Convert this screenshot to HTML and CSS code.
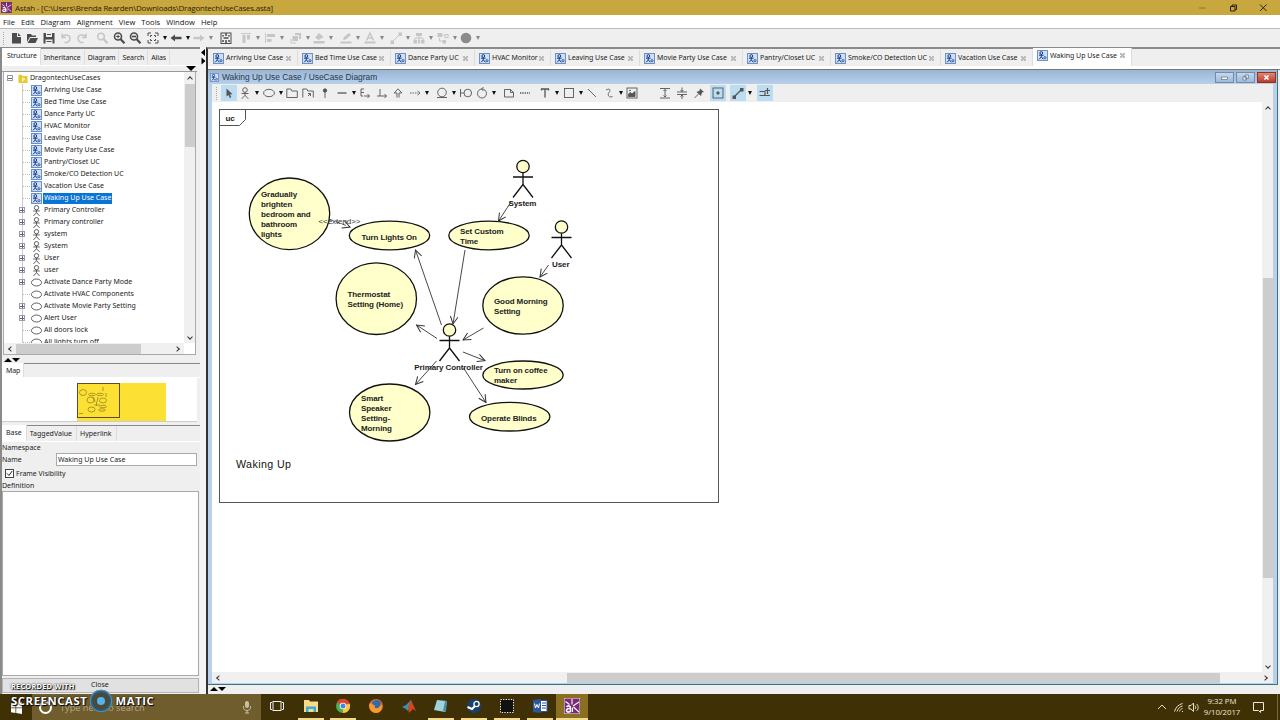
FILE: index.html
```html
<!DOCTYPE html>
<html lang="en">
<head>
    <meta charset="UTF-8">
    <meta name="viewport" content="width=device-width, initial-scale=1.0">
    <title>Astah</title>
    <link rel="stylesheet" href="styles.css">
</head>
<body>
    <!-- icon sprite -->
    <svg class="sprite">
        <symbol id="uc" viewBox="0 0 11 11"><rect x=".5" y=".5" width="10" height="10" fill="#cfdff5" stroke="#6c91c8"/><circle cx="4.3" cy="3" r="1.4" fill="none" stroke="#163c8c"/><path d="M4.3 4.5v2.3M2 5.2h4.6M4.3 6.8L2.2 9.3M4.3 6.8l2 2.5" stroke="#163c8c" fill="none"/><circle cx="8" cy="7.7" r="1.1" fill="none" stroke="#163c8c" stroke-width=".8"/></symbol>
        <symbol id="actor" viewBox="0 0 16 16"><circle cx="8" cy="5" r="2.3"/><path d="M8 7.3v3M4.5 8.5h7M8 10.3l-3.3 3.5M8 10.3l3.3 3.5"/></symbol>
        <symbol id="oval" viewBox="0 0 16 16"><ellipse cx="8" cy="8" rx="5.4" ry="3.7"/></symbol>
        <symbol id="new" viewBox="0 0 16 16"><path d="M4 3h5v4h4v6.500H4zM10 3l3 3h-3z" fill="currentColor" stroke="none"/></symbol>
        <symbol id="open" viewBox="0 0 16 16"><path d="M3 12V4h4l1 1.500h4V7H6zM6.500 8H14l-2.500 5H3.500z" fill="currentColor" stroke="none"/></symbol>
        <symbol id="save" viewBox="0 0 16 16"><path d="M2.500 3h11v10.500h-11zM5 3v4h6V3zM4.500 9.500v4h7v-4z" fill="currentColor" fill-rule="evenodd" stroke="none"/><path d="M6 4.500h4M5.500 11.500h5"/></symbol>
        <symbol id="undo" viewBox="0 0 16 16"><path d="M4 3.500v4h4M4.300 7C6 4 12 4 12 8.500c0 3-3 4.500-5.500 4" stroke-width="1.500"/></symbol>
        <symbol id="redo" viewBox="0 0 16 16"><path d="M12 3.500v4H8M11.700 7C10 4 4 4 4 8.500c0 3 3 4.500 5.500 4" stroke-width="1.500"/></symbol>
        <symbol id="mag" viewBox="0 0 16 16"><circle cx="7" cy="6.500" r="3.300" stroke-width="1.600"/><path d="M9.500 9l4 4.200" stroke-width="2.200"/></symbol>
        <symbol id="magplus" viewBox="0 0 16 16"><circle cx="7" cy="6.500" r="3.500" stroke-width="1.600"/><path d="M9.500 9l4 4.200" stroke-width="2.200"/><path d="M5.200 6.500h3.600M7 4.700v3.600"/></symbol>
        <symbol id="magminus" viewBox="0 0 16 16"><circle cx="7" cy="6.500" r="3.500" stroke-width="1.600"/><path d="M9.500 9l4 4.200" stroke-width="2.200"/><path d="M5 6.500h4" stroke-width="1.700"/></symbol>
        <symbol id="fit" viewBox="0 0 16 16"><path d="M3 6V3h3M10 3h3v3M13 10v3h-3M6 13H3v-3"/><path d="M5.500 7V5.500H7M9 5.500h1.500V7M10.500 9v1.500H9M7 10.500H5.500V9"/></symbol>
        <symbol id="left" viewBox="0 0 16 16"><path d="M2.500 8L7 4.500v2.300h6.500v2.400H7v2.300z" fill="currentColor" stroke="none"/></symbol>
        <symbol id="right" viewBox="0 0 16 16"><path d="M13.500 8L9 4.500v2.300H2.500v2.400H9v2.300z" fill="currentColor" stroke="none"/></symbol>
        <symbol id="grid" viewBox="0 0 16 16"><rect x="3" y="3" width="10" height="10.500"/><path d="M8 3v3M8 10v3.500M5 5v1.500M11 5v1.500M5.500 8h5M5 10v2M11 10v2" stroke-width="1.500"/></symbol>
        <symbol id="altop" viewBox="0 0 16 16"><path d="M3 3.500h10"/><path d="M4.500 5h3v8h-3zM9 5h3v4.500H9z" fill="currentColor" stroke="none"/></symbol>
        <symbol id="alleft" viewBox="0 0 16 16"><path d="M3.500 3v10"/><path d="M5 4h8v3H5zM5 9h4.500v3H5z" fill="currentColor" stroke="none"/></symbol>
        <symbol id="order" viewBox="0 0 16 16"><path d="M7 3h6v6h-2V5H7zM4.500 6H10v5H4.500z" fill="currentColor" stroke="none"/><path d="M3 9v4h5"/></symbol>
        <symbol id="fill" viewBox="0 0 16 16"><path d="M8 3l4.500 4-5 3-3.500-2.500zM2.500 11h11v2.500h-11z" fill="currentColor" stroke="none"/></symbol>
        <symbol id="pen" viewBox="0 0 16 16"><path d="M5 10l1-3 5-4 2 2-5 4.500zM2.500 11.500h11v2h-11z" fill="currentColor" stroke="none"/></symbol>
        <symbol id="fontc" viewBox="0 0 16 16"><path d="M4.500 10.500L8 3l3.500 7.500M6 8h4" stroke-width="1.500"/><path d="M2.500 12.500h11" stroke-width="2"/></symbol>
        <symbol id="link" viewBox="0 0 16 16"><path d="M4.500 11.500l7-7"/><path d="M2.500 10.500H6V14H2.500zM10.500 2.500H14V6h-3.500z" fill="currentColor" stroke="none"/></symbol>
        <symbol id="tree" viewBox="0 0 16 16"><path d="M5 3h6v3H5zM2.500 10H6v3.500H2.500zM10 10h3.500v3.500H10zM7 10h2v3.500H7z" fill="currentColor" stroke="none"/><path d="M8 6v4M4 10V8h8v2"/></symbol>
        <symbol id="flow" viewBox="0 0 16 16"><path d="M2.500 3H7v4H2.500zM7.500 10H11v3.500H7.500z" fill="currentColor" stroke="none"/><path d="M7 5h2M4.500 8v3h3"/><rect x="10" y="4.500" width="3" height="3"/></symbol>
        <symbol id="ball" viewBox="0 0 16 16"><circle cx="8" cy="8" r="5.300" fill="currentColor" stroke="none"/></symbol>

        <symbol id="cursor" viewBox="0 0 16 16"><path d="M5.500 3.500v8l2-1.600 1.300 3 1.500-.700L9 9.500l2.500-.3z" fill="currentColor" stroke="none"/></symbol>
        <symbol id="pkg" viewBox="0 0 16 16"><path d="M2.800 12.500v-8.500h4l1 2h5.500v6.500z"/></symbol>
        <symbol id="pkgin" viewBox="0 0 16 16"><path d="M2.800 12.500v-8.500h4l1 2h5.500v6.500M8 11l2.500-2.500M10.500 11V8.500H8"/></symbol>
        <symbol id="pin" viewBox="0 0 16 16"><circle cx="8" cy="5.500" r="1.700" fill="currentColor"/><path d="M8 7v6"/></symbol>
        <symbol id="dash" viewBox="0 0 16 16"><path d="M3.500 8h9" stroke-width="1.300"/></symbol>
        <symbol id="eline" viewBox="0 0 16 16"><path d="M7 4H4v7h2M4 7.500h3M7 11h5.500M10.500 9l2 2-2 2"/></symbol>
        <symbol id="tline" viewBox="0 0 16 16"><path d="M6 4v7M3 11h9.500M10.500 9l2 2-2 2"/></symbol>
        <symbol id="up" viewBox="0 0 16 16"><path d="M7 12.500V8H4.200L8 3.800 11.800 8H9v4.500"/></symbol>
        <symbol id="dots" viewBox="0 0 16 16"><path d="M3 8h8" stroke-dasharray="1.500 1"/><path d="M10.500 6l2.500 2-2.500 2"/></symbol>
        <symbol id="entity" viewBox="0 0 16 16"><circle cx="8" cy="7.500" r="4.300"/><path d="M3 12.500h10"/></symbol>
        <symbol id="bound" viewBox="0 0 16 16"><circle cx="9.800" cy="8" r="3.800"/><path d="M2.500 4v8M2.500 8H6"/></symbol>
        <symbol id="control" viewBox="0 0 16 16"><circle cx="8" cy="8.500" r="4.500"/><path d="M9.500 2L7.500 4l2 2"/></symbol>
        <symbol id="note" viewBox="0 0 16 16"><path d="M3.500 4.500h6l3 3v4.500h-9zM9.500 4.500v3h3"/></symbol>
        <symbol id="dotline" viewBox="0 0 16 16"><path d="M3 8h10" stroke-width="1.300" stroke-dasharray="1.300 1"/></symbol>
        <symbol id="tee" viewBox="0 0 16 16"><path d="M4.500 5.500V4h7v1.500M8 4v8.500" stroke-width="1.300"/></symbol>
        <symbol id="box" viewBox="0 0 16 16"><rect x="3.500" y="3.500" width="9" height="9"/></symbol>
        <symbol id="diag" viewBox="0 0 16 16"><path d="M4 4l8 8"/></symbol>
        <symbol id="curve" viewBox="0 0 16 16"><path d="M5 5c4-2 5 0 3 2.500S8 13 11.500 11.500"/></symbol>
        <symbol id="pic" viewBox="0 0 16 16"><rect x="3" y="3" width="10" height="10"/><path d="M4.500 11.500V9l2-1.500 1.500 1.500 3-2.500v5z" fill="currentColor"/><circle cx="6" cy="5.500" r=".5"/></symbol>
        <symbol id="vmax" viewBox="0 0 16 16"><path d="M3 3.500h10M3 13h10M8 4.500v7M6.500 6L8 4.500 9.500 6M6.500 10.500L8 12l1.500-1.500"/></symbol>
        <symbol id="vmin" viewBox="0 0 16 16"><path d="M3 7h10M3 9.500h10M8 2.500v4M8 14v-4M6.500 5L8 6.500 9.500 5M6.500 11.500L8 10l1.500 1.500"/></symbol>
        <symbol id="tack" viewBox="0 0 16 16"><path d="M3.500 13l4-4"/><path d="M9 3.500l4 3.500-2 .500-1 3.500-4.500-4 3-1.200z" fill="currentColor" stroke="none"/></symbol>
        <symbol id="focus" viewBox="0 0 16 16"><rect x="3" y="3" width="10" height="10"/><circle cx="8" cy="8" r="1.200" fill="currentColor"/></symbol>
        <symbol id="bind" viewBox="0 0 16 16"><path d="M4 12l8-8" stroke-width="1.300"/><path d="M2.500 10.500H6V14H2.500zM10 3h3.500v3.500H10z" fill="currentColor" stroke="none"/></symbol>
        <symbol id="depth" viewBox="0 0 16 16"><path d="M2.500 6.500H8M2.500 10.500h5.500V6.500M10.500 3v6M8 5.500h5M8 10.500h5" stroke-width="1.200"/></symbol>
        <symbol id="logo" viewBox="0 0 16 16"><rect width="16" height="16" fill="#7b2a76"/><path d="M2.500 9c2-2 4-1 4 1v4M6.500 10.500c-5-.500-5 3.500-2 3.500 1 0 2-.500 2-1.500" stroke="#fff" stroke-width="1.600" fill="none"/><path d="M9 8l6-4M9.500 9l5.500 5M8 6.500V1M5.500 6.500L1.500 3.500M8.500 9.500V14" stroke="#fff" stroke-width="1.100" fill="none"/></symbol>
    </svg>

    <div class="titlebar">
        <svg class="app-logo"><use href="#logo"/></svg>
        <span class="title">Astah - [C:\Users\Brenda Rearden\Downloads\DragontechUseCases.asta]</span>
        <svg class="win-buttons" viewBox="0 0 80 14"><path d="M2 7h7" stroke="#8d752c"/><path d="M33.500 5.500h4.500v4.500h-4.500zM35 5.500V4h4.500v4.500H38" /><path d="M63 3.500l6.500 6.500M69.500 3.500l-6.500 6.500"/></svg>
    </div>

    <div class="menubar">
        <span>File</span><span>Edit</span><span>Diagram</span><span>Alignment</span><span>View</span><span>Tools</span><span>Window</span><span>Help</span>
    </div>

    <div class="toolbar main-toolbar">
        <i class="grip"></i>
        <svg class="ic"><use href="#new"/></svg>
        <svg class="ic"><use href="#open"/></svg>
        <svg class="ic m1"><use href="#save"/></svg>
        <svg class="ic m1 off"><use href="#undo"/></svg>
        <svg class="ic off"><use href="#redo"/></svg>
        <svg class="ic m4 off"><use href="#mag"/></svg>
        <svg class="ic m1"><use href="#magplus"/></svg>
        <svg class="ic"><use href="#magminus"/></svg>
        <svg class="ic m2"><use href="#fit"/></svg><i class="caret"></i>
        <svg class="ic n1"><use href="#left"/></svg><i class="caret"></i>
        <svg class="ic n1 off"><use href="#right"/></svg><i class="caret dim"></i>
        <svg class="ic m3"><use href="#grid"/></svg>
        <svg class="ic m4 off"><use href="#altop"/></svg><i class="caret dim"></i>
        <svg class="ic off"><use href="#alleft"/></svg><i class="caret dim"></i>
        <svg class="ic m2 off"><use href="#order"/></svg><i class="caret dim"></i>
        <svg class="ic n1 off"><use href="#fill"/></svg><i class="caret dim"></i>
        <svg class="ic m3 off"><use href="#pen"/></svg><i class="caret dim"></i>
        <svg class="ic off"><use href="#fontc"/></svg><i class="caret dim"></i>
        <svg class="ic m2 off"><use href="#link"/></svg><i class="caret dim"></i>
        <svg class="ic n1 off"><use href="#tree"/></svg><i class="caret dim"></i>
        <svg class="ic off"><use href="#flow"/></svg><i class="caret dim"></i>
        <svg class="ic n1 gray"><use href="#ball"/></svg><i class="caret dim"></i>
    </div>

    <div class="main">
        <div class="left">
            <div class="tabs">
                <span class="tab active">Structure</span><span class="tab">Inheritance</span><span class="tab">Diagram</span><span class="tab">Search</span><span class="tab">Alias</span>
            </div>
            <div class="tree-head"><i class="big-caret"></i></div>
            <div class="tree-pane">
                <div class="tree-view">
                    <ul class="tree">
                        <li class="root"><i class="box minus"></i><svg class="folder" viewBox="0 0 11 11"><path d="M0 1h4l1 1.500h6V11H0z" fill="#e8c92c"/><path d="M5 9.500V5h2v2.300H5" stroke="#fff" fill="none"/></svg>DragontechUseCases</li>
                        <li><i class="stub"></i><svg class="uc"><use href="#uc"/></svg>Arriving Use Case</li>
                        <li><i class="stub"></i><svg class="uc"><use href="#uc"/></svg>Bed Time Use Case</li>
                        <li><i class="stub"></i><svg class="uc"><use href="#uc"/></svg>Dance Party UC</li>
                        <li><i class="stub"></i><svg class="uc"><use href="#uc"/></svg>HVAC Monitor</li>
                        <li><i class="stub"></i><svg class="uc"><use href="#uc"/></svg>Leaving Use Case</li>
                        <li><i class="stub"></i><svg class="uc"><use href="#uc"/></svg>Movie Party Use Case</li>
                        <li><i class="stub"></i><svg class="uc"><use href="#uc"/></svg>Pantry/Closet UC</li>
                        <li><i class="stub"></i><svg class="uc"><use href="#uc"/></svg>Smoke/CO Detection UC</li>
                        <li><i class="stub"></i><svg class="uc"><use href="#uc"/></svg>Vacation Use Case</li>
                        <li><i class="stub"></i><svg class="uc"><use href="#uc"/></svg><b class="selected">Waking Up Use Case</b></li>
                        <li><i class="box"></i><svg class="node"><use href="#actor"/></svg>Primary Controller</li>
                        <li><i class="box"></i><svg class="node"><use href="#actor"/></svg>Primary controller</li>
                        <li><i class="box"></i><svg class="node"><use href="#actor"/></svg>system</li>
                        <li><i class="box"></i><svg class="node"><use href="#actor"/></svg>System</li>
                        <li><i class="box"></i><svg class="node"><use href="#actor"/></svg>User</li>
                        <li><i class="box"></i><svg class="node"><use href="#actor"/></svg>user</li>
                        <li><i class="box"></i><svg class="node"><use href="#oval"/></svg>Activate Dance Party Mode</li>
                        <li><i class="stub"></i><svg class="node"><use href="#oval"/></svg>Activate HVAC Components</li>
                        <li><i class="box"></i><svg class="node"><use href="#oval"/></svg>Activate Movie Party Setting</li>
                        <li><i class="box"></i><svg class="node"><use href="#oval"/></svg>Alert User</li>
                        <li><i class="stub"></i><svg class="node"><use href="#oval"/></svg>All doors lock</li>
                        <li><i class="stub"></i><svg class="node"><use href="#oval"/></svg>All lights turn off</li>
                    </ul>
                    <div class="vscroll"><i class="chev up"></i><div class="thumb"></div><i class="chev down"></i></div>
                </div>
                <div class="hscroll"><i class="chev prev"></i><div class="thumb"></div><i class="chev next"></i></div>
            </div>
            <div class="updown"><i></i><i class="down"></i></div>

            <div class="tabs map-tabs"><span class="tab active">Map</span></div>
            <div class="map">
                <svg class="minimap" viewBox="77 383 89 38">
                    <rect x="77" y="383" width="89" height="38" fill="#fde034"/>
                    <rect x="77.500" y="383.500" width="42" height="34" fill="#fde034" stroke="#5b4d28"/>
                    <g fill="none" stroke="#8b7a22" stroke-width=".7">
                        <ellipse cx="83" cy="392.500" rx="3.500" ry="3"/><ellipse cx="92" cy="394.500" rx="3.500" ry="1.200"/><ellipse cx="100" cy="394.500" rx="3.500" ry="1.200"/>
                        <ellipse cx="90.500" cy="400" rx="3.500" ry="3"/><ellipse cx="103" cy="400.500" rx="3.500" ry="2.500"/><ellipse cx="103" cy="406.500" rx="3.500" ry="1.200"/>
                        <ellipse cx="91.500" cy="409.500" rx="3.500" ry="2.500"/><ellipse cx="102" cy="410" rx="3.500" ry="1.200"/>
                        <path d="M103 387v4M106 393v4M96.500 402v4M94 405h6M79 413.500h4M95 402l-1.500-5M97 402l1-5"/>
                    </g>
                </svg>
            </div>

            <div class="tabs prop-tabs"><span class="tab active">Base</span><span class="tab">TaggedValue</span><span class="tab">Hyperlink</span></div>
            <div class="props">
                <div class="row">Namespace</div>
                <div class="row name-row"><label>Name</label><div class="field">Waking Up Use Case</div></div>
                <div class="row check-row"><svg class="check" viewBox="0 0 9 9"><rect x=".5" y=".5" width="8" height="8" fill="#fff" stroke="#444"/><path d="M2 4.500l2 2 3.200-4.500" fill="none" stroke="#222"/></svg>Frame Visibility</div>
                <div class="row def-row">Definition</div>
                <div class="textarea"></div>
                <div class="close">Close</div>
            </div>
        </div>

        <div class="splitter"><svg viewBox="0 0 6 16"><path d="M5 0v7L1 3.500zM1.500 8.500v7l4-3.500z"/></svg></div>

        <div class="right">
            <div class="doc-tabs">
                <div class="doc-tab"><svg class="uc"><use href="#uc"/></svg><span>Arriving Use Case</span><i class="x"></i></div>
                <div class="doc-tab t2"><svg class="uc"><use href="#uc"/></svg><span>Bed Time Use Case</span><i class="x"></i></div>
                <div class="doc-tab t3"><svg class="uc"><use href="#uc"/></svg><span>Dance Party UC</span><i class="x"></i></div>
                <div class="doc-tab t4"><svg class="uc"><use href="#uc"/></svg><span>HVAC Monitor</span><i class="x"></i></div>
                <div class="doc-tab t5"><svg class="uc"><use href="#uc"/></svg><span>Leaving Use Case</span><i class="x"></i></div>
                <div class="doc-tab t6"><svg class="uc"><use href="#uc"/></svg><span>Movie Party Use Case</span><i class="x"></i></div>
                <div class="doc-tab t7"><svg class="uc"><use href="#uc"/></svg><span>Pantry/Closet UC</span><i class="x"></i></div>
                <div class="doc-tab t8"><svg class="uc"><use href="#uc"/></svg><span>Smoke/CO Detection UC</span><i class="x"></i></div>
                <div class="doc-tab t9"><svg class="uc"><use href="#uc"/></svg><span>Vacation Use Case</span><i class="x"></i></div>
                <div class="doc-tab t10 active"><svg class="uc"><use href="#uc"/></svg><span>Waking Up Use Case</span><i class="x"></i></div>
            </div>
            <div class="frame">
                <div class="frame-title">
                    <svg class="frame-icon"><use href="#uc"/></svg>
                    <span>Waking Up Use Case / UseCase Diagram</span>
                    <div class="frame-buttons">
                        <svg viewBox="0 0 19 11"><rect x="6" y="5" width="7" height="3" fill="#fff" stroke="#56697f" stroke-width=".8"/></svg>
                        <svg viewBox="0 0 19 11"><path d="M9 2.500h4v4H9zM6.500 4.500h4v4h-4z" fill="#fff" stroke="#56697f" stroke-width=".9"/></svg>
                        <svg class="red" viewBox="0 0 19 11"><path d="M7 3l5 5M12 3L7 8" stroke="#fff" stroke-width="2"/></svg>
                    </div>
                </div>
                <div class="frame-body">
                    <div class="toolbar draw-toolbar">
                        <i class="grip"></i>
                        <svg class="ic on"><use href="#cursor"/></svg>
                        <svg class="ic"><use href="#actor"/></svg><i class="caret"></i>
                        <svg class="ic"><use href="#oval"/></svg><i class="caret"></i>
                        <svg class="ic n1"><use href="#pkg"/></svg>
                        <svg class="ic"><use href="#pkgin"/></svg>
                        <svg class="ic m1"><use href="#pin"/></svg>
                        <svg class="ic m1"><use href="#dash"/></svg><i class="caret"></i>
                        <svg class="ic n1"><use href="#eline"/></svg>
                        <svg class="ic m1"><use href="#tline"/></svg>
                        <svg class="ic"><use href="#up"/></svg>
                        <svg class="ic m1"><use href="#dots"/></svg><i class="caret"></i>
                        <svg class="ic m3"><use href="#entity"/></svg><i class="caret"></i>
                        <svg class="ic"><use href="#bound"/></svg>
                        <svg class="ic"><use href="#control"/></svg><i class="caret"></i>
                        <svg class="ic m3"><use href="#note"/></svg>
                        <svg class="ic"><use href="#dotline"/></svg>
                        <svg class="ic m4"><use href="#tee"/></svg><i class="caret"></i>
                        <svg class="ic"><use href="#box"/></svg><i class="caret"></i>
                        <svg class="ic n1"><use href="#diag"/></svg>
                        <svg class="ic m1"><use href="#curve"/></svg><i class="caret"></i>
                        <svg class="ic n1"><use href="#pic"/></svg>
                        <svg class="ic gap"><use href="#vmax"/></svg>
                        <svg class="ic m1"><use href="#vmin"/></svg>
                        <svg class="ic m1"><use href="#tack"/></svg>
                        <svg class="ic m3 on"><use href="#focus"/></svg>
                        <svg class="ic m4 on"><use href="#bind"/></svg><i class="caret"></i>
                        <svg class="ic m3 on"><use href="#depth"/></svg>
                    </div>
                    <div class="canvas-row">
                        <svg class="canvas" viewBox="212 102 1050 570">
                            <defs>
                                <marker id="arrow" viewBox="-9 -5 10 10" refX="0" refY="0" markerWidth="10" markerHeight="10" markerUnits="userSpaceOnUse" orient="auto"><path d="M-7.500-3.800L0 0l-7.500 3.800" fill="none" stroke="#333"/></marker>
                                <g id="person"><circle cx="0" cy="0" r="6.200" fill="#ffffcb"/><path d="M0 6.200V18M-10 10.500h20M0 18l-10 13M0 18l10 13" fill="none"/></g>
                            </defs>
                            <rect x="219.500" y="109.500" width="499" height="393" fill="none" stroke="#555"/>
                            <path d="M219.500 125.500h20l6-6v-10" fill="none" stroke="#555"/>
                            <text class="lbl" x="225.500" y="121">uc</text>
                            <g class="shapes">
                                <ellipse cx="289.500" cy="213.800" rx="40.200" ry="35.800"/>
                                <ellipse cx="389.500" cy="235.500" rx="40.200" ry="14.300"/>
                                <ellipse cx="489" cy="235.500" rx="40.200" ry="14.300"/>
                                <ellipse cx="376.300" cy="298.700" rx="40.200" ry="35.800"/>
                                <ellipse cx="523" cy="305.500" rx="40.200" ry="28.700"/>
                                <ellipse cx="523" cy="375" rx="40.200" ry="14"/>
                                <ellipse cx="389.700" cy="412.500" rx="40.200" ry="28.500"/>
                                <ellipse cx="509.700" cy="416.700" rx="40.200" ry="14.300"/>
                            </g>
                            <g class="people">
                                <use href="#person" x="523" y="166.500"/>
                                <use href="#person" x="561.500" y="227"/>
                                <use href="#person" x="449.500" y="330"/>
                            </g>
                            <g class="lines">
                                <path d="M329 219l21 8" stroke-dasharray="4 3"/>
                                <path d="M441.500 325L415.500 250"/>
                                <path d="M465 250L453 324"/>
                                <path d="M437 338.500L416.500 325"/>
                                <path d="M483.500 328L463 340"/>
                                <path d="M463 352l22 8.700"/>
                                <path d="M436.500 361L415.500 384.500"/>
                                <path d="M463.500 368L486 402.500"/>
                                <path d="M511 202L498.500 221"/>
                                <path d="M548.500 265L540 277"/>
                            </g>
                            <g class="lbl">
                                <text x="261" y="196.500">Gradually</text><text x="261" y="206.500">brighten</text><text x="261" y="216.500">bedroom and</text><text x="261" y="226.500">bathroom</text><text x="261" y="236.500">lights</text>
                                <text x="361.500" y="239.500">Turn Lights On</text>
                                <text x="460" y="233.500">Set Custom</text><text x="460" y="243.500">Time</text>
                                <text x="347.500" y="296.700">Thermostat</text><text x="347.500" y="306.700">Setting (Home)</text>
                                <text x="494" y="303.500">Good Morning</text><text x="494" y="313.500">Setting</text>
                                <text x="494" y="373">Turn on coffee</text><text x="494" y="383">maker</text>
                                <text x="361" y="401">Smart</text><text x="361" y="411">Speaker</text><text x="361" y="421">Setting-</text><text x="361" y="431">Morning</text>
                                <text x="481" y="420.700">Operate Blinds</text>
                                <text x="508.500" y="206.200">System</text>
                                <text x="552" y="267">User</text>
                                <text x="414.300" y="369.500">Primary Controller</text>
                            </g>
                            <text class="stereo" x="318.500" y="223.500" textLength="42">&lt;&lt;extend&gt;&gt;</text>
                            <text class="caption" x="236" y="468" textLength="55">Waking Up</text>
                        </svg>
                        <div class="vscroll"><i class="chev up"></i><div class="thumb"></div><i class="chev down"></i></div>
                    </div>
                    <div class="hscroll"><i class="chev prev"></i><div class="thumb"></div><i class="chev next"></i></div>
                </div>
            </div>
            <div class="updown"><i></i><i class="down"></i></div>
        </div>
    </div>

    <div class="taskbar">
        <svg class="start" viewBox="0 0 32 26"><path d="M11 9.500l4.500-.7v4.700H11zM16.200 8.700L22 7.800v5.700h-5.800zM11 14.200h4.500V19l-4.500-.7zM16.200 14.200H22V20l-5.800-.9z" fill="#fff"/></svg>
        <div class="search">
            <i class="cortana"></i><span>Type here to search</span>
            <svg viewBox="0 0 12 14"><rect x="4" y="1" width="4" height="7" rx="2" fill="#c9bfa3"/><path d="M2.500 6v1.500c0 4 7 4 7 0V6M6 10.500V13M4 13h4" fill="none" stroke="#c9bfa3"/></svg>
        </div>
        <div class="apps">
            <div class="app"><svg viewBox="0 0 16 16"><rect x="4" y="3.500" width="8" height="9"/><path d="M3 4.500H1.500v7H3M13 4.500h1.500v7H13"/></svg></div>
            <div class="app open"><svg viewBox="0 0 16 16"><path d="M1 2h5l1 1.500h8V14H1z" fill="#f7dc83" stroke="none"/><path d="M3 14V8.500h10V14h-2.500v-3h-5v3z" fill="#3fa9dc" stroke="none"/></svg></div>
            <div class="app open"><svg viewBox="0 0 16 16"><g stroke="none"><circle cx="8" cy="8" r="7" fill="#4caf50"/><path d="M8 8L2 4.300A7 7 0 0 1 14.600 5.500z" fill="#e5412f"/><path d="M8 8l6.600-2.500A7 7 0 0 1 8 15z" fill="#fbc931"/><circle cx="8" cy="8" r="3.300" fill="#fff"/><circle cx="8" cy="8" r="2.500" fill="#4584ee"/></g></svg></div>
            <div class="app"><svg viewBox="0 0 16 16"><g stroke="none"><circle cx="8" cy="8" r="7" fill="#e66a1f"/><circle cx="8.500" cy="6.500" r="4.600" fill="#2e69b3"/><path d="M1.200 6c2-2 3.500 0 4.500 1 2 .5 2 1 .5 2 2 2.500 6 1 6.500-3 2 2 2 8-4.500 9C4 15 .5 11 1.200 6z" fill="#f59a2b"/></g></svg></div>
            <div class="app"><svg viewBox="0 0 16 16"><g stroke="none"><path d="M1 9l4-2 5-5 1 3-4 8-2-2z" fill="#3f8fb8"/><path d="M7 9l3-7 5 11-3-2-4 4z" fill="#d3471f"/></g></svg></div>
            <div class="app open"><svg viewBox="0 0 16 16"><path d="M4 2l10 1-2 11L1 12z" fill="#9fd3dd" stroke="none"/><path d="M12 3l2 0-1 11-3-1z" fill="#4c8f9d" stroke="none"/></svg></div>
            <div class="app open"><svg viewBox="0 0 16 16"><circle cx="8" cy="8" r="7.200" fill="#193f6d" stroke="none"/><circle cx="10.500" cy="6" r="2.600" stroke="#fff" stroke-width="1.300"/><path d="M1.500 9l4.500 2L9 8" stroke="#fff" stroke-width="2"/></svg></div>
            <div class="app open"><svg viewBox="0 0 16 16"><rect x="1.500" y="1.500" width="13" height="13" fill="#111" stroke="#eee" stroke-dasharray="1.300 1.300"/></svg></div>
            <div class="app open"><svg viewBox="0 0 16 16"><rect x="8" y="2.500" width="7" height="11" fill="#fff" stroke="#2b579a"/><path d="M10 5h4M10 7.500h4M10 10h4" stroke="#2b579a"/><path d="M1 2l8-1v14l-8-1z" fill="#2b579a" stroke="none"/><path d="M2.500 5.500l1 4.500L5 6.500 6.500 10l1-4.500" stroke="#fff"/></svg></div>
            <div class="app open current"><svg class="big"><use href="#logo"/></svg></div>
        </div>
        <svg class="tray" viewBox="0 0 46 14"><path d="M3 9l4-4 4 4"/><path d="M19.500 11.500c1-4 4-7 8-8M22 11.500c1-3 3-5 5.500-5.500M24.500 11.500c.5-1.500 1.500-2.500 3-3M27 11.500h1"/><path d="M34 5.500h2l2.500-2.500v8.500L36 9h-2zM40 5.500c1 1 1 2.500 0 3.500M41.700 4c2 2 2 5 0 6.700" /></svg>
        <div class="clock">9:32 PM<br>9/10/2017</div>
        <svg class="action" viewBox="0 0 14 14"><path d="M1.500 2.500h10v8H8.500v2l-2-2h-5z"/></svg>
        <i class="desk"></i>
    </div>

    <!-- recorder watermark over the bottom-left corner -->
    <div class="watermark">
        <div class="rec">RECORDED WITH</div>
        <div class="brand"><span>SCREENCAST</span><svg viewBox="0 0 24 24"><circle cx="12" cy="12" r="10" fill="#4b4a3a" stroke="#2b6180" stroke-width="2.500"/><circle cx="12" cy="12" r="10.800" fill="none" stroke="#5ba3cf" stroke-width=".8"/><circle cx="12" cy="12" r="4" fill="#56b4ec"/></svg><span>MATIC</span></div>
    </div>
</body>
</html>
```
FILE: styles.css
```css
* {
    box-sizing: border-box;
}
body {
    margin: 0;
    width: 1280px;
    height: 720px;
    overflow: hidden;
    display: flex;
    flex-direction: column;
    position: relative;
    font-family: "Noto Sans", "Open Sans", sans-serif;
    font-size: 7px;
    line-height: 12px;
    color: #222;
    background: #efefef;
}
svg {
    display: block;
    flex: none;
}
.sprite {
    position: absolute;
    width: 0;
    height: 0;
}
.titlebar {
    height: 15px;
    flex: none;
    display: flex;
    align-items: center;
    background: #c9a73f;
    font-family: "Open Sans", sans-serif;
    font-size: 8px;
    letter-spacing: -.22px;
    color: #2b230c;
}
.app-logo {
    width: 11px;
    height: 11px;
    margin: 0 3px 0 1px;
}
.title {
    white-space: nowrap;
}
.win-buttons {
    width: 80px;
    height: 14px;
    margin-left: auto;
    margin-right: 3px;
    fill: none;
    stroke: #2b230c;
}
.menubar {
    height: 14px;
    flex: none;
    display: flex;
    gap: 6px;
    padding: 0 3px;
    background: #fff;
    border-bottom: 1px solid #bcbcbc;
    font-family: "Open Sans", sans-serif;
    font-size: 7.6px;
    line-height: 14px;
    color: #111;
}

/* toolbars */
.toolbar {
    display: flex;
    align-items: center;
    flex: none;
    background: #efefef;
}
.main-toolbar {
    height: 18px;
    padding-left: 3px;
}
.grip {
    width: 2px;
    height: 13px;
    margin-right: 3px;
    border-left: 1px dotted #aaa;
}
.ic {
    width: 16px;
    height: 16px;
    fill: none;
    stroke: currentColor;
    color: #4c4c4c;
}
.draw-toolbar .ic {
    stroke-width: .9;
    color: #555;
}
.main-toolbar .off { color: #c6c6c6; }
.main-toolbar .gray { color: #8b8b8b; }
.on { background: #bcdcf2; }
.m1 { margin-left: 1px; }
.m2 { margin-left: 2px; }
.m3 { margin-left: 3px; }
.m4 { margin-left: 4px; }
.n1 { margin-left: -1px; }
.gap { margin-left: 17px; }
.caret {
    width: 4px;
    margin: 0 2px;
    border: 2px solid transparent;
    border-top: 4px solid #111;
    border-bottom: 0;
}
.dim { border-top-color: #888; }

.main {
    flex: 1;
    min-height: 0;
    display: flex;
}

/* left side */
.left {
    width: 200px;
    flex: none;
    display: flex;
    flex-direction: column;
    border-left: 2px solid #8a8a8a;
    border-top: 2px solid #8a8a8a;
}
.tabs {
    display: flex;
    align-items: flex-end;
    height: 17px;
    flex: none;
    border-bottom: 1px solid #fff;
}
.tab {
    height: 15px;
    line-height: 15px;
    padding: 0 3px;
    border-right: 1px solid #ddd;
    letter-spacing: -.08px;
}
.tab.active {
    height: 17px;
    padding-left: 5px;
    background: #fff;
}
.tree-head {
    height: 6px;
    flex: none;
    display: flex;
    justify-content: flex-end;
    border-bottom: 1px solid #999;
    margin-right: 3px;
}
.big-caret {
    height: 5px;
    margin-right: 1px;
    border: 5px solid transparent;
    border-top-color: #000;
    border-bottom: 0;
}
.tree-pane {
    height: 283px;
    flex: none;
    display: flex;
    flex-direction: column;
    margin: 0 4px 0 1px;
    border: 1px solid #aaa;
    border-top: 0;
    background: #fff;
}
.tree-view {
    flex: 1;
    min-height: 0;
    display: flex;
}
.tree {
    flex: 1;
    overflow: hidden;
    margin: 0;
    padding: 0;
    list-style: none;
    background: linear-gradient(#ccc, #ccc) 18px 12px / 1px 100% no-repeat;
}
.tree li {
    display: flex;
    align-items: center;
    height: 12px;
    padding-left: 15px;
    white-space: nowrap;
}
.tree li.root {
    padding-left: 3px;
}
.box {
    width: 6px;
    height: 6px;
    margin-right: 6px;
    flex: none;
    border: 1px solid #99a;
    background: linear-gradient(#668, #668) center / 4px 1px no-repeat, linear-gradient(#668, #668) center / 1px 4px no-repeat, #fff;
}
.box.minus {
    margin-right: 5px;
    background: linear-gradient(#668, #668) center / 4px 1px no-repeat, #fff;
}
.stub {
    width: 7px;
    height: 1px;
    margin: 0 1px 0 4px;
    border-top: 1px dotted #bbb;
}
.uc {
    width: 11px;
    height: 11px;
    margin-right: 2px;
}
.folder {
    width: 10px;
    height: 9px;
    margin-right: 2px;
}
.node {
    width: 15px;
    height: 15px;
    margin-left: -2px;
    fill: none;
    stroke: #555;
}
.selected {
    height: 11px;
    line-height: 10px;
    margin-left: -1px;
    padding: 0 1px;
    font-weight: normal;
    color: #fff;
    background: #0a74d6;
}
.vscroll {
    width: 11px;
    flex: none;
    display: flex;
    flex-direction: column;
    align-items: center;
    background: #f0f0f0;
}
.hscroll {
    height: 11px;
    flex: none;
    display: flex;
    align-items: center;
    background: #f0f0f0;
}
.thumb {
    background: #cdcdcd;
}
.vscroll .thumb { width: 10px; }
.hscroll .thumb { height: 10px; }
.chev {
    width: 4px;
    height: 4px;
    flex: none;
    border: solid #333;
    border-width: 1px 1px 0 0;
}
.chev.up { transform: rotate(-45deg); margin: 5px 0 3px; }
.chev.down { transform: rotate(135deg); margin: auto 0 4px; }
.chev.prev { transform: rotate(-135deg); margin: 0 3px 0 5px; }
.chev.next { transform: rotate(45deg); margin: 0 5px 0 auto; }
.tree-view .thumb { height: 63px; }
.tree-pane .hscroll { margin-right: 11px; }
.tree-pane .hscroll .thumb { width: 125px; }

.updown {
    display: flex;
    height: 9px;
    flex: none;
    padding: 2px 2px 0;
}
.updown i {
    height: 4px;
    border: 4px solid transparent;
    border-bottom-color: #000;
    border-top: 0;
}
.updown i.down {
    border-top: 4px solid #000;
    border-bottom: 0;
}
.left .updown {
    padding-top: 3px;
    border-bottom: 1px solid #888;
}
.map-tabs {
    height: 14px;
}
.map-tabs .tab.active {
    height: 14px;
    padding-left: 4px;
}
.map {
    height: 44px;
    flex: none;
    margin-right: 3px;
    padding: 5px 0 0 75px;
    background: #fff;
    border-bottom: 1px solid #ccc;
}
.minimap {
    width: 89px;
    height: 38px;
}
.prop-tabs {
    height: 17px;
    margin-top: 3px;
    border-top: 1px solid #888;
}
.prop-tabs .tab {
    padding: 0 4px 0 3px;
    line-height: 16px;
    letter-spacing: 0;
}
.prop-tabs .tab.active {
    height: 16px;
    padding-left: 4px;
}
.props {
    flex: 1;
    min-height: 0;
    display: flex;
    flex-direction: column;
    padding-right: 1px;
}
.row {
    height: 11px;
    flex: none;
    display: flex;
    align-items: center;
    margin-right: 2px;
}
.name-row {
    height: 13px;
}
.name-row label {
    width: 54px;
}
.field {
    flex: 1;
    height: 13px;
    padding-left: 1px;
    line-height: 11px;
    border: 1px solid #aaa;
    background: #fff;
}
.check-row {
    height: 15px;
    padding-left: 3px;
}
.check {
    width: 9px;
    height: 9px;
    margin-right: 2px;
}
.def-row {
    height: 10px;
}
.textarea {
    height: 185px;
    flex: none;
    background: #fff;
    border: 1px solid #aaa;
}
.close {
    height: 15px;
    margin: 2px 0 0;
    padding-left: 88px;
    line-height: 12px;
    background: #e1e1e1;
    border: 1px solid #b4b4b4;
}

.splitter {
    width: 6px;
    flex: none;
    background: #f4f4f4;
}
.splitter svg {
    width: 6px;
    height: 16px;
    margin-top: 2px;
}

/* documents */
.right {
    flex: 1;
    min-width: 0;
    display: flex;
    flex-direction: column;
    border-top: 2px solid #8a8a8a;
    border-left: 2px solid #333;
}
.doc-tabs {
    height: 21px;
    flex: none;
    display: flex;
    align-items: flex-end;
    padding: 0 0 3px 1px;
    border-bottom: 1px solid #777;
    background: linear-gradient(#efefef 17px, #fff 17px);
    letter-spacing: -.03px;
}
.doc-tab {
    width: 89px;
    height: 16px;
    flex: none;
    display: flex;
    align-items: center;
    padding-left: 4px;
    border-right: 1px solid #ddd;
    white-space: nowrap;
}
.t2 { width: 93px; }
.t3 { width: 84px; }
.t4 { width: 76px; }
.t5 { width: 89px; }
.t6 { width: 103px; }
.t7 { width: 88px; }
.t8 { width: 110px; }
.t9 { width: 92px; }
.t10 { width: 99px; }
.doc-tab.active {
    height: 18px;
    padding-bottom: 3px;
    background: #fff;
}
.x {
    width: 5px;
    height: 5px;
    margin-left: auto;
    margin-right: 6px;
    background: linear-gradient(45deg, transparent 38%, #bbb 38%, #bbb 62%, transparent 62%), linear-gradient(-45deg, transparent 38%, #bbb 38%, #bbb 62%, transparent 62%);
}
.frame {
    flex: 1;
    min-height: 0;
    display: flex;
    flex-direction: column;
    margin-right: 2px;
    border-right: 1px solid #3a7480;
    border-bottom: 1px solid #3a7480;
    background: #b9d0ea;
}
.frame-title {
    height: 14px;
    flex: none;
    display: flex;
    align-items: center;
    padding-left: 2px;
    font-family: "Liberation Sans", sans-serif;
    font-size: 8.4px;
    color: #26384d;
    background: linear-gradient(#9ab6d4, #b8cfea);
}
.frame-icon {
    width: 9px;
    height: 9px;
    margin-right: 3px;
}
.frame-buttons {
    display: flex;
    gap: 2px;
    margin-left: auto;
    margin-right: 1px;
}
.frame-buttons svg {
    width: 19px;
    height: 11px;
    fill: none;
    background: linear-gradient(#c5d8ec, #9fbad8);
    border: 1px solid #6f8caf;
}
.frame-buttons .red {
    background: linear-gradient(#dc8a7c, #c03a26);
    border-color: #8c3326;
}
.frame-body {
    flex: 1;
    min-height: 0;
    display: flex;
    flex-direction: column;
    margin: 0 4px 1px;
}
.draw-toolbar {
    height: 18px;
    padding-left: 4px;
}
.canvas-row {
    flex: 1;
    min-height: 0;
    display: flex;
}
.canvas {
    width: 1050px;
    height: 570px;
    background: #fff;
}
.canvas-row .vscroll .thumb { height: 300px; margin-top: 164px; }
.frame-body > .hscroll .thumb { width: 653px; margin-left: 343px; }
.frame-body > .hscroll .next { margin-right: 6px; }
.shapes ellipse {
    fill: #ffffcb;
    stroke: #111;
    stroke-width: 1.3;
}
.people {
    stroke: #111;
    stroke-width: 1.3;
}
.lines path {
    fill: none;
    stroke: #333;
    stroke-width: .9;
    marker-end: url(#arrow);
}
.lbl {
    font: bold 8px "Liberation Sans", sans-serif;
    letter-spacing: -.1px;
    fill: #222;
}
.stereo {
    font: 8px "Liberation Sans", sans-serif;
    fill: #333;
}
.caption {
    font: 10.7px "Liberation Sans", sans-serif;
    fill: #111;
}

/* taskbar */
.taskbar {
    height: 26px;
    flex: none;
    display: flex;
    align-items: center;
    background: #3f3105;
}
.start {
    width: 32px;
    height: 26px;
}
.search {
    width: 229px;
    height: 26px;
    display: flex;
    align-items: center;
    padding-left: 7px;
    background: #6f5d2e;
    color: #b5a988;
    font-family: "Open Sans", sans-serif;
    font-size: 9.2px;
}
.search span {
    padding-top: 2px;
}
.search svg {
    width: 12px;
    height: 14px;
    margin-left: auto;
    margin-right: 8px;
}
.cortana {
    width: 13px;
    height: 13px;
    margin-right: 8px;
    border: 2px solid #fff;
    border-radius: 50%;
}
.apps {
    display: flex;
    align-self: stretch;
}
.app {
    width: 26px;
    margin-left: 6.7px;
    display: flex;
    align-items: center;
    justify-content: center;
    border-bottom: 2px solid transparent;
}
.app:first-child {
    margin: 0 1px 0 3px;
}
.app svg {
    width: 16px;
    height: 16px;
    fill: none;
    stroke: #eee;
}
.app.open {
    border-bottom-color: #f5d98a;
}
.app.current {
    width: 32px;
    margin-left: 3.7px;
    background: #8a6f22;
}
.tray {
    width: 46px;
    height: 14px;
    margin-left: auto;
    fill: none;
    stroke: #e8e0c8;
}
.clock {
    width: 42px;
    text-align: center;
    font-family: "Open Sans", sans-serif;
    font-size: 7.8px;
    letter-spacing: -.05px;
    line-height: 11.5px;
    color: #f1ead6;
}
.action {
    width: 14px;
    height: 14px;
    margin: 0 11px 0 9px;
    fill: none;
    stroke: #f1ead6;
}
.desk {
    width: 3px;
    height: 26px;
    border-left: 1px solid #75683f;
}

.watermark {
    position: absolute;
    left: 11px;
    top: 680px;
    font-family: "Open Sans", sans-serif;
    font-weight: bold;
    color: #fff;
    text-shadow: 0 0 2px #000, 1px 1px 1px #000;
}
.rec {
    font-size: 7.4px;
    line-height: 13px;
    letter-spacing: .2px;
}
.brand {
    display: flex;
    align-items: center;
    height: 20px;
    margin-top: -2px;
    font-size: 11.3px;
    letter-spacing: .6px;
}
.brand svg {
    width: 24px;
    height: 24px;
    margin: 0 2px 0 2px;
}
```
